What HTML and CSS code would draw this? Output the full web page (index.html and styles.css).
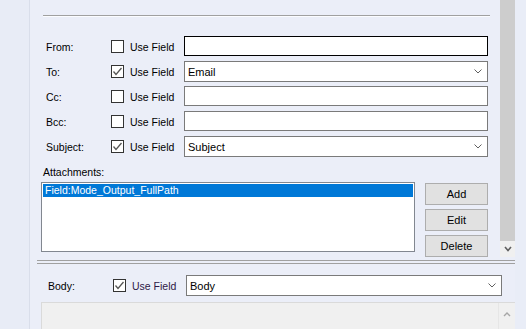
FILE: index.html
```html
<!DOCTYPE html>
<html>
<head>
<meta charset="utf-8">
<link rel="stylesheet" href="styles.css">
</head>
<body>
<div class="window">
  <div class="strip-left"></div>
  <div class="main">
    <div class="upper">
      <div class="content">
        <div class="rule"></div>
        <div class="rows">
          <div class="row">
            <span class="label">From:</span>
            <span class="check"></span>
            <span class="uf">Use Field</span>
            <div class="input focus"></div>
          </div>
          <div class="row">
            <span class="label">To:</span>
            <span class="check on"><svg viewBox="0 0 13 13" width="13" height="13"><polyline points="2.5,6.5 5,9.5 10.5,3" fill="none" stroke="#555" stroke-width="1.3"/></svg></span>
            <span class="uf">Use Field</span>
            <div class="select"><span class="val">Email</span><svg class="chev" viewBox="0 0 8 5" width="8" height="5"><polyline points="0.5,0.5 4,4 7.5,0.5" fill="none" stroke="#606060" stroke-width="1"/></svg></div>
          </div>
          <div class="row">
            <span class="label">Cc:</span>
            <span class="check"></span>
            <span class="uf">Use Field</span>
            <div class="input"></div>
          </div>
          <div class="row">
            <span class="label">Bcc:</span>
            <span class="check"></span>
            <span class="uf">Use Field</span>
            <div class="input"></div>
          </div>
          <div class="row">
            <span class="label">Subject:</span>
            <span class="check on"><svg viewBox="0 0 13 13" width="13" height="13"><polyline points="2.5,6.5 5,9.5 10.5,3" fill="none" stroke="#555" stroke-width="1.3"/></svg></span>
            <span class="uf">Use Field</span>
            <div class="select"><span class="val">Subject</span><svg class="chev" viewBox="0 0 8 5" width="8" height="5"><polyline points="0.5,0.5 4,4 7.5,0.5" fill="none" stroke="#606060" stroke-width="1"/></svg></div>
          </div>
        </div>
        <div class="att-label">Attachments:</div>
        <div class="att">
          <div class="list">
            <div class="item sel">Field:Mode_Output_FullPath</div>
          </div>
          <div class="buttons">
            <div class="btn">Add</div>
            <div class="btn">Edit</div>
            <div class="btn">Delete</div>
          </div>
        </div>
      </div>
      <div class="vscroll">
        <div class="thumb"></div>
        <div class="arrow"><svg viewBox="0 0 8 6" width="8" height="6"><polyline points="1,1 4,4.5 7,1" fill="none" stroke="#606060" stroke-width="1.6"/></svg></div>
      </div>
    </div>
    <div class="splitter"><div class="line"></div><div class="line"></div></div>
    <div class="lower">
      <div class="row body-row">
        <span class="label">Body:</span>
        <span class="check on"><svg viewBox="0 0 13 13" width="13" height="13"><polyline points="2.5,6.5 5,9.5 10.5,3" fill="none" stroke="#555" stroke-width="1.3"/></svg></span>
        <span class="uf purple">Use Field</span>
        <div class="select wide"><span class="val">Body</span><svg class="chev" viewBox="0 0 8 5" width="8" height="5"><polyline points="0.5,0.5 4,4 7.5,0.5" fill="none" stroke="#606060" stroke-width="1"/></svg></div>
      </div>
      <div class="bodybox">
        <div class="bb-area"></div>
        <div class="bb-scroll"><svg viewBox="0 0 8 5" width="8" height="5"><polyline points="1,4 4,1 7,4" fill="none" stroke="#a6a6a6" stroke-width="1.4"/></svg></div>
      </div>
    </div>
  </div>
  <div class="strip-right"></div>
</div>
</body>
</html>
```

FILE: styles.css
```css
html, body {
  margin: 0;
  padding: 0;
}
* {
  box-sizing: border-box;
}
body {
  width: 526px;
  height: 329px;
  overflow: hidden;
  background: #e9edf7;
  font-family: "Liberation Sans", Arial, sans-serif;
  font-size: 10.5px;
  color: #000;
}
.window {
  display: flex;
  height: 329px;
}
.strip-left {
  width: 30px;
  flex: none;
  background: #e8ecf6;
  border-right: 1px solid #d9deea;
}
.strip-right {
  flex: 1;
  background: #e9edf7;
}
.main {
  width: 485px;
  flex: none;
  display: flex;
  flex-direction: column;
  background: #ebeef8;
}
.upper {
  height: 257px;
  display: flex;
}
.content {
  width: 470px;
  flex: none;
}
.rule {
  margin: 15px 0 0 13px;
  width: 447px;
  height: 2px;
  border-top: 1px solid #a0a0a0;
  border-bottom: 1px solid #fbfcff;
}
.rows {
  margin-top: 19px;
  display: flex;
  flex-direction: column;
  gap: 4px;
}
.row {
  display: flex;
  align-items: center;
  height: 21px;
  padding-left: 16px;
}
.label {
  width: 65px;
  flex: none;
}
.check {
  width: 13px;
  height: 13px;
  border: 1px solid #333;
  background: #fff;
  flex: none;
  position: relative;
}
.check svg {
  position: absolute;
  left: -1px;
  top: -1px;
}
.uf {
  width: 60px;
  flex: none;
  padding-left: 6px;
}
.purple {
  color: #2e1846;
}
.input {
  width: 304px;
  height: 20px;
  border: 1px solid #7a7a7a;
  background: #fff;
  flex: none;
  margin-top: -1px;
}
.input.focus {
  border-color: #000;
}
.select {
  width: 304px;
  height: 21px;
  border: 1px solid #7a7a7a;
  background: #fff;
  flex: none;
  display: flex;
  align-items: center;
  justify-content: space-between;
  padding: 0 5px 0 3px;
}
.select .val {
  font-size: 11px;
}
.chev {
  display: block;
}
.att-label {
  margin: 9px 0 0 13px;
  height: 12px;
  line-height: 12px;
}
.att {
  display: flex;
  margin: 4px 0 0 11px;
}
.list {
  width: 374px;
  height: 70px;
  border: 1px solid #828790;
  background: #fff;
  padding: 1px;
}
.item {
  height: 13px;
  line-height: 13px;
  padding-left: 2px;
  white-space: nowrap;
}
.item.sel {
  background: #0078d7;
  color: #fff;
}
.buttons {
  margin-left: 10px;
  margin-top: 1px;
  display: flex;
  flex-direction: column;
  gap: 4px;
}
.btn {
  width: 63px;
  height: 22px;
  border: 1px solid #adadad;
  background: #e1e1e1;
  display: flex;
  align-items: center;
  justify-content: center;
  font-size: 11px;
}
.vscroll {
  width: 15px;
  flex: none;
  display: flex;
  flex-direction: column;
  background: #f0f0f0;
}
.thumb {
  height: 241px;
  background: #cdcdcd;
}
.arrow {
  flex: 1;
  display: flex;
  align-items: center;
  justify-content: center;
}
.splitter {
  margin: 3px 0 0 7px;
  display: flex;
  flex-direction: column;
  gap: 2px;
}
.line {
  height: 1px;
  background: #a0a0a0;
}
.lower {
  flex: 1;
  display: flex;
  flex-direction: column;
}
.body-row {
  margin-top: 11px;
  padding-left: 18px;
}
.select.wide {
  width: 316px;
}
.bodybox {
  margin: 6px 0 0 11px;
  flex: 1;
  display: flex;
  border-top: 1px solid #dadada;
  border-left: 1px solid #dadada;
  background: #f0f0f0;
}
.bb-area {
  flex: 1;
}
.bb-scroll {
  width: 17px;
  border-left: 1px solid #e6e6e6;
  display: flex;
  justify-content: center;
  padding-top: 9px;
}
.bb-scroll svg {
  display: block;
}
```
